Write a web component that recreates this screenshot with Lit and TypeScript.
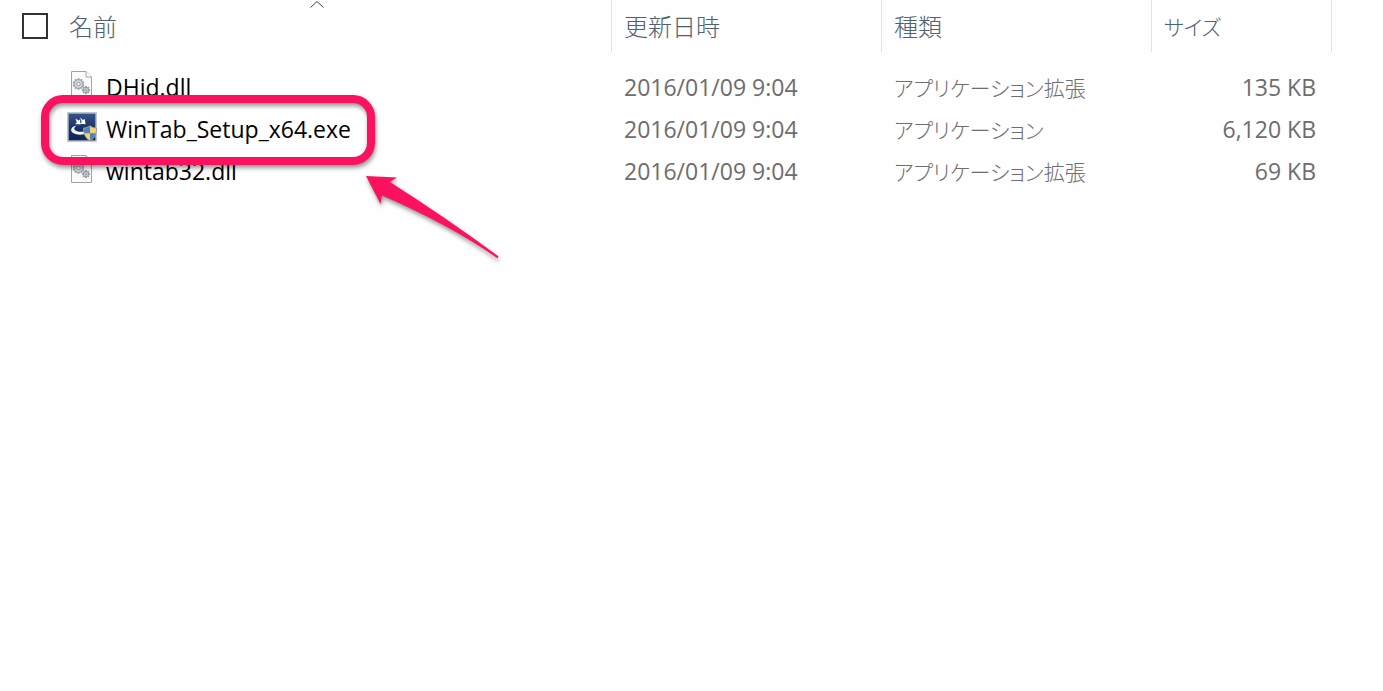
import { LitElement, html, css, svg, nothing } from "lit";
import { customElement } from "lit/decorators.js";

interface FileRow {
  name: string;
  date: string;
  type: string;
  size: string;
  icon: "dll" | "setup";
  marked?: boolean;
}

const FILES: FileRow[] = [
  { name: "DHid.dll", date: "2016/01/09 9:04", type: "アプリケーション拡張", size: "135 KB", icon: "dll" },
  { name: "WinTab_Setup_x64.exe", date: "2016/01/09 9:04", type: "アプリケーション", size: "6,120 KB", icon: "setup", marked: true },
  { name: "wintab32.dll", date: "2016/01/09 9:04", type: "アプリケーション拡張", size: "69 KB", icon: "dll" },
];

const gear = (cx: number, cy: number, r: number, teeth: number) => svg`
  <g transform="translate(${cx} ${cy})">
    ${Array.from({ length: teeth }, (_, i) => svg`
      <rect x="-1" y=${-r - 1.4} width="2" height="2.4" fill="#9ca5ad" transform="rotate(${(i * 360) / teeth})"></rect>`)}
    <circle r=${r} fill="#d3d8dc" stroke="#97a0a8" stroke-width="1"></circle>
    <circle r=${r * 0.4} fill="#fff" stroke="#8f98a0" stroke-width="1"></circle>
  </g>`;

const dllIcon = html`
  <svg class="icon" viewBox="0 0 30 30" aria-hidden="true">
    <path d="M4.5 1.5H19L24.500 7V28.500H4.500Z" fill="#fafafa" stroke="#a3a3a3"></path>
    <path d="M19 1.500V7H24.500" fill="#fff" stroke="#a3a3a3"></path>
    ${gear(11.5, 14, 4.4, 10)}
    ${gear(19, 20, 2.7, 8)}
  </svg>`;

const setupIcon = html`
  <svg class="icon" viewBox="0 0 30 30" aria-hidden="true">
    <defs>
      <linearGradient id="navy" x1="0" y1="0" x2="0" y2="1">
        <stop offset="0" stop-color="#3a5689"></stop>
        <stop offset="0.5" stop-color="#1a3468"></stop>
        <stop offset="1" stop-color="#10264f"></stop>
      </linearGradient>
    </defs>
    <rect x="1" y="1" width="28" height="28" fill="url(#navy)" stroke="#a9b4c6" stroke-width="1.500"></rect>
    <path d="M10 13.500C3.500 14.500 2.500 19 6.500 21.300C9.500 23 14 23 18 22V19.300C14 20.300 9.500 19.800 7.800 18C6.500 16.500 7.500 14.800 10 13.500Z" fill="#f2f5f9"></path>
    <path d="M8.500 6.500L11.500 8.500L13 7.500L13.500 12.500L8 12L9.800 10.500Z" fill="#fff"></path>
    <path d="M13 5.500L16 8L17.800 7L18.500 12.300L12.800 11.800L14.800 10Z" fill="#fff"></path>
    <path d="M23 13.800C21 15.300 18.500 16 16.500 16C16.300 22 18.500 26.500 23 28.700C27.500 26.500 29.800 22 29.500 16C27.500 16 25 15.300 23 13.800Z" fill="#f4d272" stroke="#8993a0" stroke-width="0.800"></path>
    <path d="M23 14.500C21 15.800 18.800 16.400 17 16.400C16.900 18.300 17 19.800 17.500 21.300H23Z" fill="#4c83bd"></path>
    <path d="M23 21.300H28.600C27.700 24.600 25.700 26.900 23 28.200Z" fill="#4c83bd"></path>
  </svg>`;

@customElement("app-root")
export class AppRoot extends LitElement {
  static styles = css`
    :host {
      display: block;
      min-height: 100vh;
      background: #fefefe;
      color: #6d6d6d;
      font: 23px/42px "Open Sans", "Noto Sans CJK JP", sans-serif;
    }
    .files {
      width: 100%;
      padding-left: 21px;
      box-sizing: border-box;
      table-layout: fixed;
      border-collapse: separate;
      border-spacing: 0;
    }
    .col-wide { width: 270px; }
    .col-size { width: 180px; }
    .col-rest { width: 52px; }
    th, td {
      padding: 0 12px;
      text-align: left;
      font-weight: 400;
      white-space: nowrap;
    }
    th {
      position: relative;
      height: 52px;
      padding-right: 0;
      color: #4f6070;
      border-left: 1px solid #e3e3e3;
      box-sizing: border-box;
    }
    th.first {
      padding-left: 1px;
      border-left: 0;
    }
    .head {
      display: flex;
      align-items: center;
      gap: 21px;
    }
    .sort {
      display: block;
      padding: 0;
      border: 0;
      background: none;
      color: inherit;
      cursor: pointer;
    }
    .sort, .type {
      font: 300 24px/42px "Noto Sans CJK JP", sans-serif;
      font-feature-settings: "palt";
    }
    .type, .kana { font-size: 21px; }
    .check {
      appearance: none;
      width: 26px;
      height: 26px;
      margin: 0;
      border: 2px solid #333;
      background: #fff;
    }
    .check:checked { background: #333; }
    .caret {
      position: absolute;
      top: 0;
      left: 50%;
      width: 14px;
      height: 9px;
      margin-left: -6px;
    }
    .spacer td {
      height: 14px;
      line-height: 14px;
    }
    td { padding-left: 13px; height: 42px; }
    td.name { padding-left: 46px; color: #000; }
    td.size { padding-right: 15px; text-align: right; }
    .file {
      position: relative;
      display: flex;
      align-items: center;
      gap: 9px;
    }
    .icon {
      flex: none;
      width: 30px;
      height: 30px;
      margin-bottom: 4px;
    }
    .ring {
      position: absolute;
      z-index: 1;
      top: -13px;
      left: -26px;
      width: 334px;
      height: 70px;
      box-sizing: border-box;
      border: 8px solid #fb125f;
      border-radius: 22px;
      filter: drop-shadow(1px 3px 2px rgba(0, 0, 0, 0.4));
      pointer-events: none;
    }
    .arrow {
      position: absolute;
      z-index: 1;
      top: 62px;
      left: 293px;
      width: 150px;
      height: 100px;
      filter: drop-shadow(1px 3px 2px rgba(0, 0, 0, 0.4));
      pointer-events: none;
    }
  `;

  private renderName(f: FileRow) {
    return html`
      <div class="file">
        ${f.icon === "dll" ? dllIcon : setupIcon}
        <span>${f.name}</span>
        ${f.marked
          ? html`<div class="ring"></div>
              <svg class="arrow" viewBox="0 0 150 100" aria-hidden="true">
                <path d="M6 6L37 7.500L30 12Q88 49 138 86Q139 88 137 88Q90 55 22 25.500L20.500 34Z" fill="#fb125f"></path>
              </svg>`
          : nothing}
      </div>`;
  }

  render() {
    return html`
      <table class="files" lang="ja">
        <colgroup>
          <col />
          <col class="col-wide" />
          <col class="col-wide" />
          <col class="col-size" />
          <col class="col-rest" />
        </colgroup>
        <thead>
          <tr>
            <th class="first" scope="col" aria-sort="ascending">
              <div class="head">
                <input class="check" type="checkbox" aria-label="すべて選択" />
                <button class="sort" type="button">名前</button>
              </div>
              <svg class="caret" viewBox="0 0 14 9" aria-hidden="true">
                <path d="M0.500 7.500L7 1.500L13.500 7.500" fill="none" stroke="#444"></path>
              </svg>
            </th>
            <th scope="col"><button class="sort" type="button">更新日時</button></th>
            <th scope="col"><button class="sort" type="button">種類</button></th>
            <th scope="col"><button class="sort kana" type="button">サイズ</button></th>
            <th></th>
          </tr>
        </thead>
        <tbody>
          <tr class="spacer"><td colspan="5"></td></tr>
          ${FILES.map(
            (f) => html`
              <tr>
                <td class="name">${this.renderName(f)}</td>
                <td>${f.date}</td>
                <td class="type">${f.type}</td>
                <td class="size">${f.size}</td>
                <td></td>
              </tr>`
          )}
        </tbody>
      </table>`;
  }
}
